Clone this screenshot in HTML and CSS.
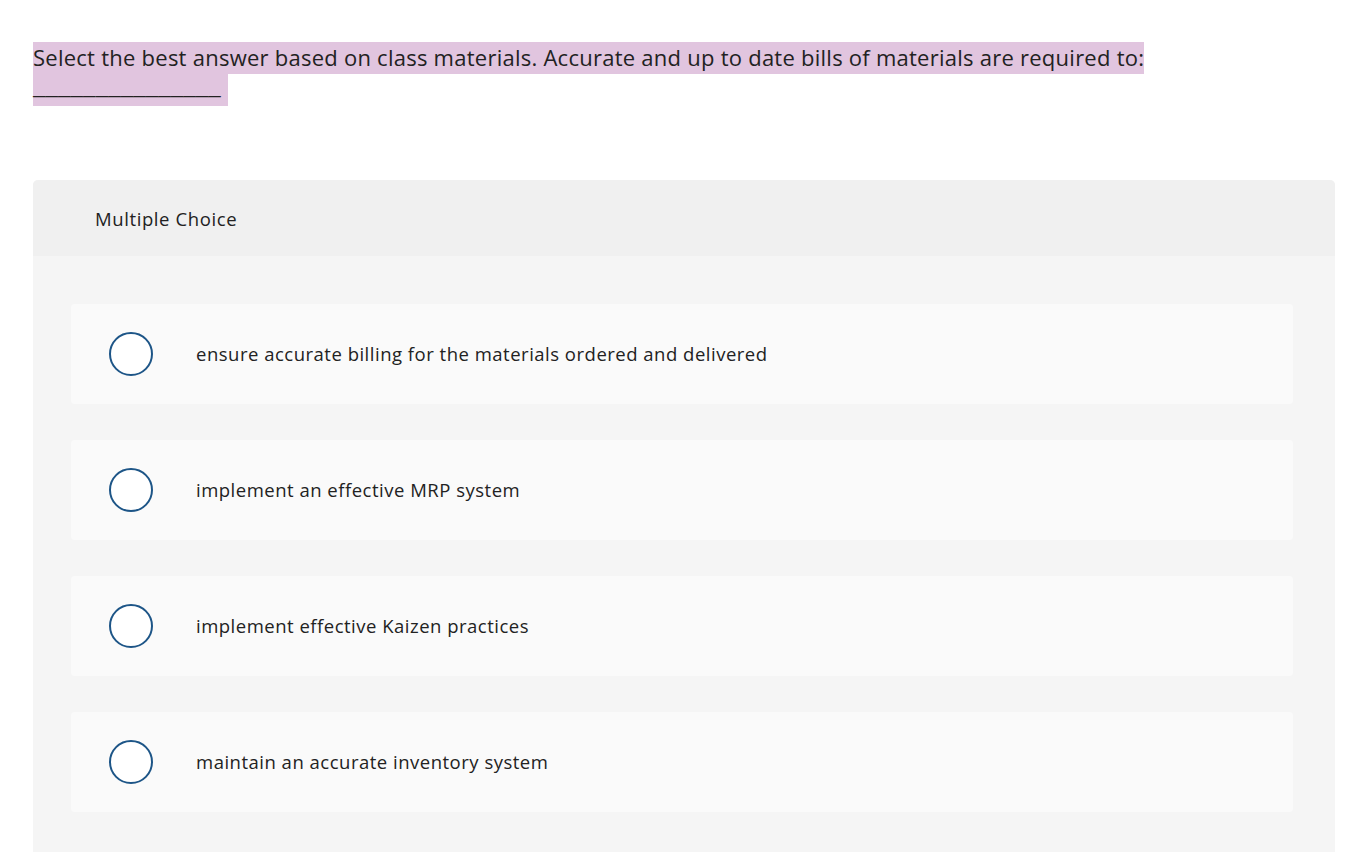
FILE: index.html
```html
<!DOCTYPE html>
<html>
<head>
<meta charset="utf-8">
<link rel="stylesheet" href="styles.css">
</head>
<body>
<div class="page">
  <div class="question"><span class="hl">Select the best answer based on class materials. Accurate and up to date bills of materials are required to: <span class="blank">_______________</span>&nbsp;</span></div>
  <div class="card">
    <div class="card-head">Multiple Choice</div>
    <div class="card-body">
      <div class="option"><span class="radio"></span><span class="label">ensure accurate billing for the materials ordered and delivered</span></div>
      <div class="option"><span class="radio"></span><span class="label">implement an effective MRP system</span></div>
      <div class="option"><span class="radio"></span><span class="label">implement effective Kaizen practices</span></div>
      <div class="option"><span class="radio"></span><span class="label">maintain an accurate inventory system</span></div>
    </div>
  </div>
</div>
</body>
</html>
```
FILE: styles.css
```css
html, body { margin: 0; padding: 0; background: #fff; }
body { font-family: "Open Sans", "Liberation Sans", sans-serif; color: #222; }
.page { padding: 41px 30px 0 33px; }
.question { font-size: 22px; line-height: 32px; width: 1140px; letter-spacing: 0.25px; }
.hl { background: #e1c5df; padding: 0 0 2px; }
.blank { display: inline-block; line-height: 22px; letter-spacing: 0; transform: scaleX(1.3); transform-origin: left center; margin-right: 44px; vertical-align: 4px; }
.card { margin-top: 75px; border-radius: 5px 5px 0 0; overflow: hidden; background: #f5f5f5; }
.card-head { background: #f0f0f0; height: 76px; box-sizing: border-box; padding: 27px 0 0 62px; font-size: 18.5px; line-height: 24px; letter-spacing: 0.6px; }
.card-body { padding: 48px 42px 40px 38px; display: flex; flex-direction: column; gap: 36px; }
.option { background: #fafafa; border-radius: 4px; height: 100px; display: flex; align-items: center; padding-left: 38px; }
.radio { width: 40px; height: 40px; border: 2px solid #1d5587; border-radius: 50%; background: #fff; flex: none; }
.label { margin-left: 43px; font-size: 18.5px; letter-spacing: 0.5px; position: relative; top: -1px; }
```
